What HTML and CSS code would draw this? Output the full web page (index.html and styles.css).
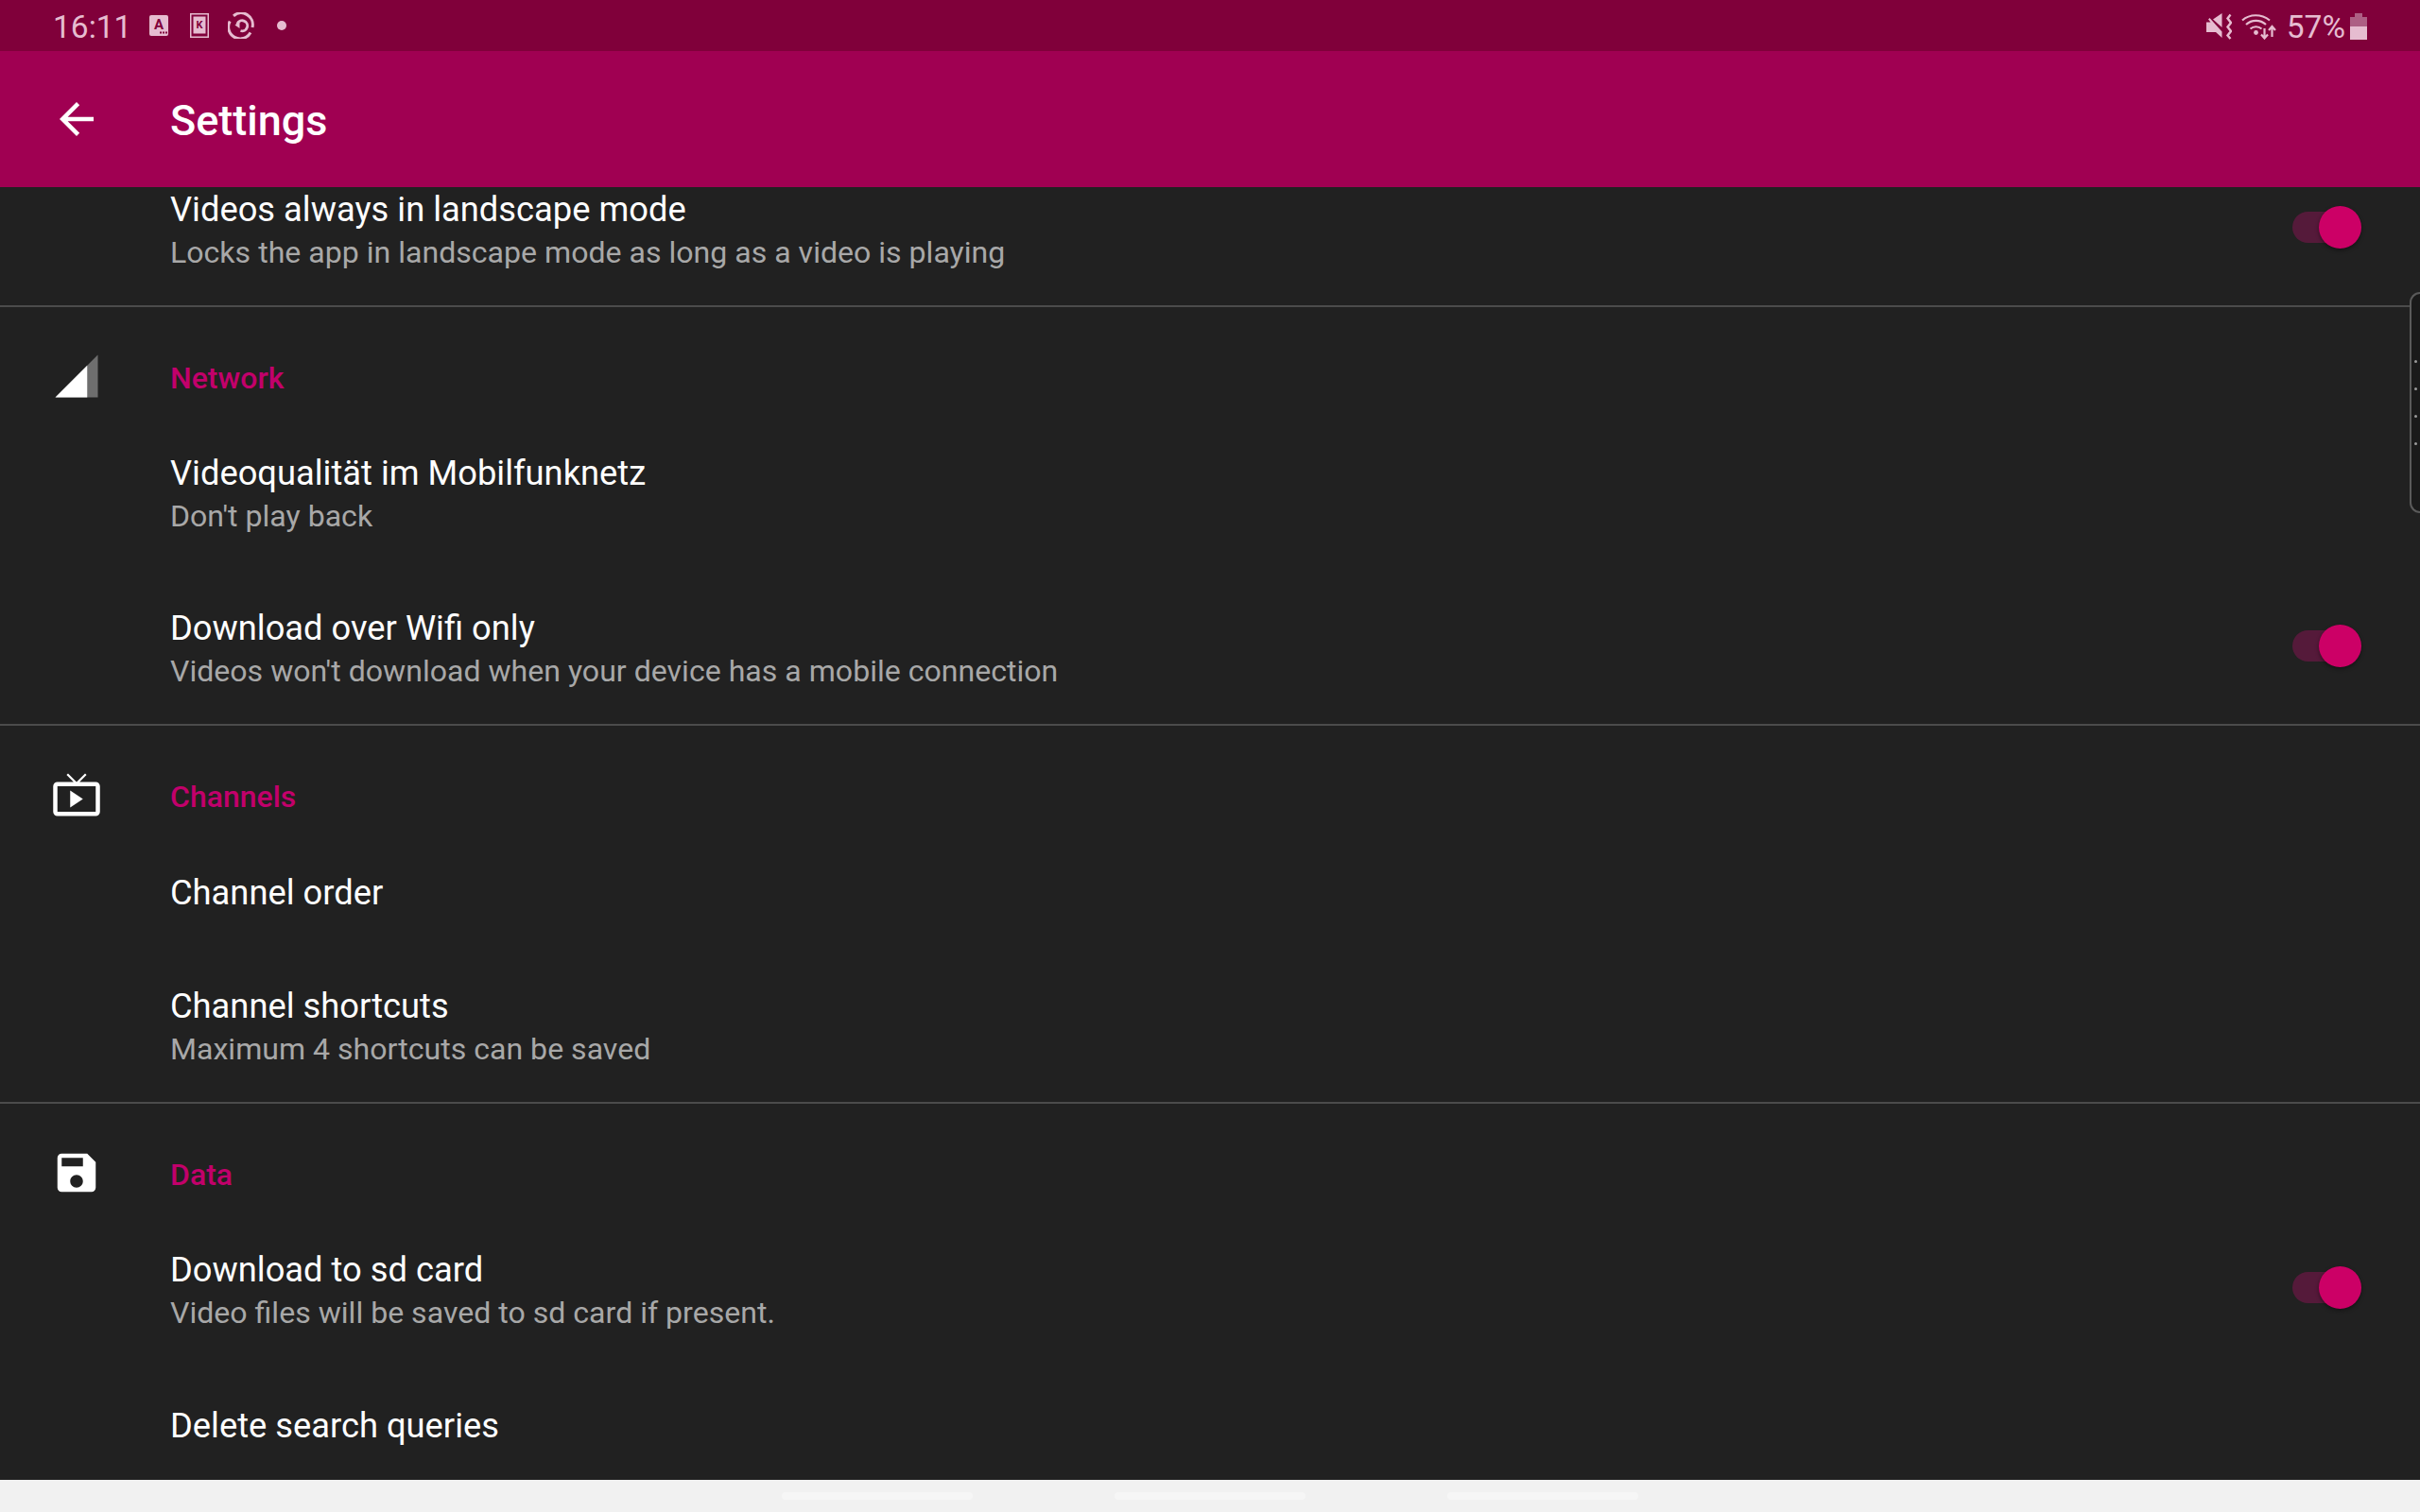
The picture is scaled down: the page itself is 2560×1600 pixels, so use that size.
FILE: index.html
```html
<!DOCTYPE html>
<html>

<head>
  <meta charset="utf-8" />
  <title>Settings</title>
  <link rel="stylesheet" href="styles.css">
</head>

<body>
  <div id="statusbar">
    <div class="status-left">
      <span class="time">16:11</span>
      <svg class="st-a" width="20" height="22" viewBox="0 0 20 22">
        <rect width="20" height="22" rx="2" fill="#e6bcd0" />
        <text x="10" y="15" class="st-letter" font-size="15">A</text>
        <rect x="11" y="17.500" width="2" height="2" fill="#80003a" />
        <rect x="14" y="17.500" width="2" height="2" fill="#80003a" />
        <rect x="17" y="17.500" width="2" height="2" fill="#80003a" />
      </svg>
      <svg class="st-k" width="20" height="26" viewBox="0 0 20 26">
        <rect x="0.750" y="0.750" width="18.500" height="24.500" fill="none" stroke="#e6bcd0" stroke-width="1.500" />
        <rect x="3.500" y="3.500" width="13" height="18" fill="#e6bcd0" />
        <text x="10" y="16" class="st-letter" font-size="11">K</text>
      </svg>
      <svg class="st-sync" width="28" height="28" viewBox="0 0 28 28" fill="none" stroke="#e6bcd0">
        <path d="M6 3.800A12.300 12.300 0 0 1 26 16" stroke-width="3" />
        <path d="M24 21.500A12.300 12.300 0 0 1 2.200 9.500" stroke-width="3" />
        <path d="M10 12.500A5.500 5.500 0 1 1 13.500 19.500" stroke-width="2.800" />
        <path d="M7.500 13.500l5-4v7.500z" fill="#e6bcd0" stroke="none" />
      </svg>
      <span class="st-dot"></span>
    </div>
    <div class="status-right">
      <svg class="st-mute" width="27" height="28" viewBox="0 0 27 28" fill="#e6bcd0">
        <path d="M0 9.500h4.500L2 6.500 3.500 5l13 14.500V26L10 20H0z" />
        <path d="M7 6.500L16.500 0v15z" />
        <path d="M25.500 1.500l-3 4 3.500 4.500-3.500 4.500 3.500 4.500-3.500 4.500 3 3.500" fill="none" stroke="#e6bcd0" stroke-width="2.400" />
      </svg>
      <svg class="st-wifi" width="37" height="28" viewBox="0 0 37 28" fill="none" stroke="#e6bcd0" stroke-width="2.200">
        <path d="M1 7.500C9 0.500 21 0.500 30 7.500" />
        <path d="M5 12C11 6.500 20 6.500 26 12" />
        <path d="M9.500 16.500C13 13.500 18 13.500 21.500 16.500" />
        <circle cx="15.500" cy="20.500" r="2.400" fill="#e6bcd0" stroke="none" />
        <path d="M24.500 16v10M21 22.500l3.500 4 3.500-4" stroke-width="2.200" />
        <path d="M32.500 25V14M29 18l3.500-4 3.500 4" stroke-width="2.200" />
      </svg>
      <span class="batt-pct">57%</span>
      <div class="battery">
        <div class="batt-nub"></div>
        <div class="batt-body">
          <div class="batt-fill"></div>
        </div>
      </div>
    </div>
  </div>

  <div id="toolbar">
    <svg class="ic" viewBox="0 0 24 24" fill="#fff">
      <path d="M20 11H7.830l5.590-5.590L12 4l-8 8 8 8 1.410-1.410L7.830 13H20v-2z" />
    </svg>
    <span class="toolbar-title">Settings</span>
  </div>

  <div id="prefs">
    <div class="row row-cut">
      <div class="row-text">
        <div class="title">Videos always in landscape mode</div>
        <div class="sub">Locks the app in landscape mode as long as a video is playing</div>
      </div>
      <div class="switch"><span class="thumb"></span></div>
    </div>

    <div class="group">
      <div class="cat">
        <svg class="ic" viewBox="0 0 24 24">
          <path d="M2 22h20V2z" fill="#fff" fill-opacity="0.35" />
          <path d="M17 7L2 22h15z" fill="#fff" />
        </svg>
        <span class="cat-name">Network</span>
      </div>
      <div class="row">
        <div class="row-text">
          <div class="title">Videoqualität im Mobilfunknetz</div>
          <div class="sub">Don't play back</div>
        </div>
      </div>
      <div class="row row-last">
        <div class="row-text">
          <div class="title">Download over Wifi only</div>
          <div class="sub">Videos won't download when your device has a mobile connection</div>
        </div>
        <div class="switch"><span class="thumb"></span></div>
      </div>
    </div>

    <div class="group">
      <div class="cat">
        <svg class="ic" viewBox="0 0 24 24" fill="#fff">
          <path d="M21 6h-7.590l3.290-3.290L16 2l-4 4-4-4-.71.71L10.590 6H3c-1.100 0-2 .89-2 2v12c0 1.100.9 2 2 2h18c1.100 0 2-.9 2-2V8c0-1.110-.9-2-2-2zm0 14H3V8h18v12zM9 10v8l6-4z" />
        </svg>
        <span class="cat-name">Channels</span>
      </div>
      <div class="row row-single">
        <div class="title">Channel order</div>
      </div>
      <div class="row row-last">
        <div class="row-text">
          <div class="title">Channel shortcuts</div>
          <div class="sub">Maximum 4 shortcuts can be saved</div>
        </div>
      </div>
    </div>

    <div class="group">
      <div class="cat">
        <svg class="ic" viewBox="0 0 24 24" fill="#fff">
          <path d="M17 3H5c-1.110 0-2 .9-2 2v14c0 1.100.89 2 2 2h14c1.100 0 2-.9 2-2V7l-4-4zm-5 16c-1.660 0-3-1.340-3-3s1.340-3 3-3 3 1.340 3 3-1.340 3-3 3zm3-10H5V5h10v4z" />
        </svg>
        <span class="cat-name">Data</span>
      </div>
      <div class="row">
        <div class="row-text">
          <div class="title">Download to sd card</div>
          <div class="sub">Video files will be saved to sd card if present.</div>
        </div>
        <div class="switch"><span class="thumb"></span></div>
      </div>
      <div class="row row-single">
        <div class="title">Delete search queries</div>
      </div>
    </div>

    <div class="edge-panel">
      <span></span><span></span><span></span><span></span>
    </div>
  </div>

  <div id="navbar">
    <span class="pill"></span>
    <span class="pill"></span>
    <span class="pill"></span>
  </div>
</body>

</html>
```

FILE: styles.css
```css
body {
  font-family: Roboto, "Liberation Sans", sans-serif;
  color: #fff;
  background-color: #212121;
  margin: 0;
  padding: 0;
  width: 2560px;
  height: 1600px;
  overflow: hidden;
  display: flex;
  flex-direction: column;
}

.ic {
  width: 54px;
  height: 54px;
  flex: none;
}

#statusbar {
  height: 54px;
  flex: none;
  box-sizing: border-box;
  background-color: #80003a;
  color: #e6bcd0;
  display: flex;
  align-items: center;
  justify-content: space-between;
  padding: 2px 56px 0;
}

.status-left,
.status-right {
  display: flex;
  align-items: center;
}

.time {
  font-size: 33.500px;
  width: 102px;
}

.st-a {
  margin-top: -2px;
}

.st-letter {
  font-family: Roboto, sans-serif;
  font-weight: 700;
  text-anchor: middle;
  fill: #80003a;
}

.st-k {
  margin-left: 23px;
  margin-top: -2px;
}

.st-sync {
  margin-left: 20px;
  margin-top: -2px;
}

.st-dot {
  width: 10px;
  height: 10px;
  border-radius: 50%;
  background-color: #e6bcd0;
  margin-left: 24px;
  margin-top: -2px;
}

.st-wifi {
  margin-left: 10px;
}

.batt-pct {
  font-size: 33.500px;
  margin-left: 11px;
}

.battery {
  width: 18px;
  margin-left: 5px;
  display: flex;
  flex-direction: column;
  align-items: center;
}

.batt-nub {
  width: 8px;
  height: 4px;
  background-color: #ad5f84;
}

.batt-body {
  width: 18px;
  height: 24px;
  background-color: #ad5f84;
  display: flex;
  align-items: flex-end;
}

.batt-fill {
  width: 100%;
  height: 14px;
  background-color: #e6bcd0;
}

#toolbar {
  height: 144px;
  flex: none;
  box-sizing: border-box;
  background-color: #a00052;
  display: flex;
  align-items: center;
  padding-left: 54px;
}

.toolbar-title {
  font-size: 45px;
  font-weight: 500;
  margin-left: 72px;
  margin-top: 2px;
}

#prefs {
  flex: 1;
  position: relative;
  overflow: hidden;
}

.group {
  border-top: 2px solid #4b4b4b;
}

.cat {
  height: 117px;
  display: flex;
  align-items: center;
  padding: 32px 0 0 54px;
  box-sizing: border-box;
}

.cat .ic {
  margin-top: -4px;
}

.cat-name {
  font-size: 32px;
  font-weight: 500;
  color: #c2006b;
  margin-left: 72px;
}

.row {
  height: 164px;
  box-sizing: border-box;
  padding: 36px 62px 0 180px;
  display: flex;
  align-items: flex-start;
  justify-content: space-between;
}

.row-last {
  height: 160px;
}

.row-cut {
  height: 125px;
  padding-top: 1px;
}

.row-single {
  height: 121px;
  padding-top: 0;
  padding-bottom: 2px;
  align-items: center;
}

.title {
  font-size: 36.300px;
  line-height: 46px;
  color: #fff;
}

.sub {
  font-size: 32.100px;
  line-height: 46px;
  margin-top: -1px;
  color: #a8a8a8;
}

.switch {
  width: 73px;
  height: 33px;
  margin-top: 25px;
  border-radius: 17px;
  background-color: #551a3a;
  position: relative;
}

.thumb {
  position: absolute;
  right: 0;
  top: -6px;
  width: 45px;
  height: 45px;
  border-radius: 50%;
  background-color: #cc0066;
  box-shadow: 0 2px 4px rgba(0, 0, 0, 0.4);
}

.edge-panel {
  position: absolute;
  right: 0;
  top: 111px;
  width: 9px;
  height: 230px;
  border: 2px solid #5a5a5a;
  border-right: 0;
  border-radius: 12px 0 0 12px;
  background-color: #1a1a1a;
  display: flex;
  flex-direction: column;
  justify-content: center;
  align-items: center;
  gap: 26px;
}

.edge-panel span {
  width: 3px;
  height: 3px;
  border-radius: 50%;
  background-color: #9a9a9a;
}

#navbar {
  height: 34px;
  flex: none;
  background-color: #f1f1f1;
  display: flex;
  justify-content: center;
  gap: 150px;
  padding-top: 13px;
  box-sizing: border-box;
}

.pill {
  width: 202px;
  height: 8px;
  border-radius: 4px;
  background-color: #f6f6f6;
}
```
